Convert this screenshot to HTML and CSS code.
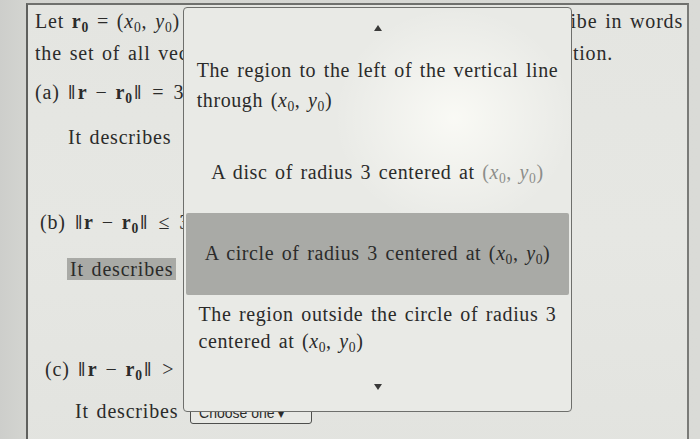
FILE: index.html
```html
<!DOCTYPE html>
<html>
<head>
<meta charset="utf-8">
<link rel="stylesheet" href="styles.css">
</head>
<body>
<div class="screen">
  <div class="panel">
    <div class="intro">
      <div class="line"><span class="lead">Let <b>r</b><sub class="bs">0</sub> = (<i>x</i><sub>0</sub>, <i>y</i><sub>0</sub>) and <b>r</b> = (<i>x</i>, <i>y</i>).</span><span>Describe in words</span></div>
      <div class="line line-2"><span class="lead">the set of all vectors <b>r</b> that satisfy the given</span><span>condition.</span></div>
    </div>
    <div class="part part-a">
      <div class="cond">(a) <span class="norm">‖</span><b>r</b><span class="op">−</span><b>r</b><sub class="bs">0</sub><span class="norm">‖</span><span class="rel">=</span>3</div>
      <div class="ans">It describes <span class="select">Choose one <span class="caret">▾</span></span></div>
    </div>
    <div class="part part-b">
      <div class="cond">(b) <span class="norm">‖</span><b>r</b><span class="op">−</span><b>r</b><sub class="bs">0</sub><span class="norm">‖</span><span class="rel">≤</span>3</div>
      <div class="ans"><span class="hl">It describes</span> <span class="select">Choose one <span class="caret">▾</span></span></div>
    </div>
    <div class="part part-c">
      <div class="cond">(c) <span class="norm">‖</span><b>r</b><span class="op">−</span><b>r</b><sub class="bs">0</sub><span class="norm">‖</span><span class="rel">&gt;</span>3</div>
      <div class="ans">It describes <span class="select">Choose one <span class="caret">▾</span></span></div>
    </div>
  </div>

  <div class="menu">
    <div class="scroll scroll-up"><span class="tri tri-up"></span></div>
    <div class="opt opt-1"><div class="opt-text">The region to the left of the vertical line<br>through (<i>x</i><sub>0</sub>, <i>y</i><sub>0</sub>)</div></div>
    <div class="opt opt-2"><div class="opt-text">A disc of radius 3 centered at <span class="glare">(<i>x</i><sub>0</sub>, <i>y</i><sub>0</sub>)</span></div></div>
    <div class="opt opt-3 active"><div class="opt-text">A circle of radius 3 centered at (<i>x</i><sub>0</sub>, <i>y</i><sub>0</sub>)</div></div>
    <div class="opt opt-4"><div class="opt-text">The region outside the circle of radius 3<br>centered at (<i>x</i><sub>0</sub>, <i>y</i><sub>0</sub>)</div></div>
    <div class="scroll scroll-down"><span class="tri tri-down"></span></div>
  </div>
</div>
</body>
</html>
```

FILE: styles.css
```css
html, body {
  margin: 0;
  padding: 0;
}

body {
  background: #d6d7d3;
  font-family: "Liberation Serif", "Times New Roman", serif;
  color: #2b2b2a;
}

.screen {
  position: relative;
  width: 700px;
  height: 439px;
  overflow: hidden;
  background: linear-gradient(90deg, #cdcecb 0, #d3d4d0 24px, #dadbd7 100%);
}

.panel {
  box-sizing: border-box;
  margin-left: 26px;
  margin-top: 3px;
  width: 663px;
  height: 460px;
  border-top: 2px solid #6f706d;
  border-left: 2px solid #5f605d;
  border-right: 2px solid #7a7b78;
  background: linear-gradient(180deg, #e4e5e1 0, #e6e7e3 50%, #e2e3df 100%);
  padding: 0 4px 0 7px;
  font-size: 20px;
  letter-spacing: 0.8px;
  word-spacing: 2px;
}

.intro .line {
  display: flex;
  justify-content: space-between;
  line-height: 32px;
  white-space: nowrap;
}

.intro .line-2 {
  padding-right: 70px;
}

.lead {
  overflow: hidden;
}

sub {
  font-size: 0.68em;
  vertical-align: -0.28em;
  line-height: 0;
}

sub.bs {
  font-weight: bold;
}

i {
  font-style: italic;
}

.norm {
  display: inline-block;
  transform: scaleX(1.5);
  margin: 0 2px;
}

.op {
  margin: 0 8px;
}

.rel {
  margin: 0 9px;
}

.part {
  display: flex;
  flex-direction: column;
}

.cond, .ans {
  line-height: 28px;
  white-space: nowrap;
}

.ans {
  padding-left: 33px;
}

.part-a {
  margin-top: 9px;
}

.part-a .ans {
  margin-top: 17px;
}

.part-b {
  margin-top: 57px;
  padding-left: 5px;
}

.part-b .ans {
  margin-top: 19px;
  padding-left: 27px;
}

.part-c {
  margin-top: 72px;
  padding-left: 10px;
}

.part-c .ans {
  margin-top: 14px;
  padding-left: 30px;
}

.hl {
  display: inline-block;
  background: #a9aaa6;
  line-height: 22px;
  padding: 0 3px 0 3px;
}

.select {
  display: inline-block;
  box-sizing: border-box;
  width: 122px;
  height: 21px;
  margin-left: 4px;
  border: 1px solid #4e4f4d;
  border-radius: 3px;
  font-family: "Liberation Sans", Arial, sans-serif;
  font-size: 14px;
  letter-spacing: 0;
  word-spacing: 0;
  line-height: 19px;
  padding-left: 8px;
  vertical-align: 0;
  background: #e8e9e5;
}

.caret {
  font-size: 12px;
}

/* dropdown menu overlaid on the question */
.menu {
  position: absolute;
  left: 183px;
  top: 7px;
  width: 389px;
  height: 405px;
  box-sizing: border-box;
  border: 1px solid #6e6f6c;
  border-radius: 4px;
  background:
    radial-gradient(ellipse 120px 110px at 270px 110px, rgba(255, 255, 250, 0.75), rgba(255, 255, 250, 0) 100%),
    #e9eae6;
  display: flex;
  flex-direction: column;
  padding: 0 2px;
  font-size: 20px;
  letter-spacing: 0.6px;
  word-spacing: 2px;
}

.scroll {
  display: flex;
  justify-content: center;
}

.scroll-up {
  height: 38px;
  padding-top: 17px;
  box-sizing: border-box;
}

.scroll-down {
  margin-top: auto;
  height: 27px;
}

.tri {
  width: 0;
  height: 0;
  border-left: 4px solid transparent;
  border-right: 4px solid transparent;
}

.tri-up {
  border-bottom: 6px solid #3a3a39;
}

.tri-down {
  border-top: 6px solid #3a3a39;
}

.opt {
  display: flex;
  justify-content: center;
}

.opt-text {
  text-align: left;
  white-space: nowrap;
}

.opt-1 {
  height: 86px;
  padding-top: 9px;
  box-sizing: border-box;
  line-height: 30px;
}

.opt-2 {
  height: 81px;
  padding-top: 26px;
  box-sizing: border-box;
  line-height: 28px;
}

.opt-3 {
  height: 82px;
  padding-top: 26px;
  box-sizing: border-box;
  line-height: 28px;
}

.opt-4 {
  padding-top: 6px;
  line-height: 27px;
}

.active {
  background: #a9aaa6;
  border-radius: 2px;
}

.glare {
  color: #8c8d8a;
}
```
